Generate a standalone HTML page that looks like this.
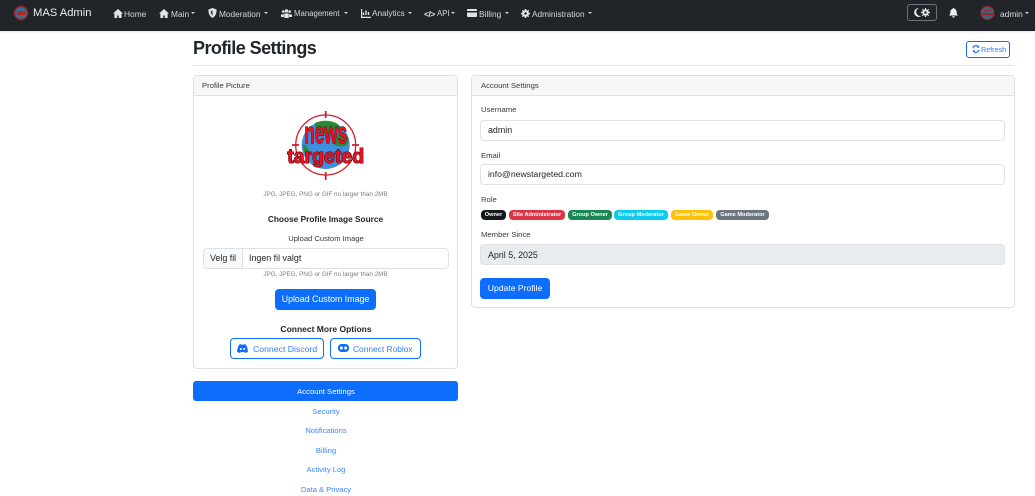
<!DOCTYPE html>
<html lang="en"><head><meta charset="utf-8"><title>Profile Settings</title>
<style>
*{box-sizing:border-box}
html,body{margin:0;padding:0;width:1035px;height:496px;overflow:hidden;background:#fff;font-family:"Liberation Sans",sans-serif;color:#212529}
.a,.t,svg.i{position:absolute}
.t{white-space:nowrap;line-height:1}
.c{transform:translateX(-50%)}
.nav{position:absolute;left:0;top:0;width:1035px;height:31px;background:#212529;box-shadow:0 1px 2px rgba(0,0,0,.12)}
.n{color:#d5d6d7;font-size:8.4px;top:8.5px;line-height:10px}
.car{position:absolute;top:12px;width:0;height:0;border-left:2.2px solid transparent;border-right:2.2px solid transparent;border-top:2.2px solid #d5d6d7}
.card{position:absolute;border:1px solid #dfe0e2;border-radius:4px;background:#fff}
.head{position:absolute;left:0;top:0;right:0;height:20px;background:#f7f7f7;border-bottom:1px solid #dfe0e2;border-radius:3px 3px 0 0}
.lab{font-size:7.7px;color:#343a40}
.inp{position:absolute;border:1px solid #dee2e6;border-radius:4px;background:#fff}
.val{font-size:8.9px;color:#212529}
.sm{font-size:6.3px;color:#7a8087}
.b{font-weight:bold}
.btn{position:absolute;background:#0d6efd;border-radius:4px;color:#fff;font-size:8.8px;text-align:center}
.out{position:absolute;border:1px solid #0d6efd;border-radius:3px;background:#fff}
.blue{color:#2f80fd}
.bd{position:absolute;top:210px;height:10px;border-radius:4px;color:#fff;font-size:5.6px;font-weight:bold;text-align:center;line-height:10px;white-space:nowrap}
.m{font-size:7.6px;color:#3d86fd}
</style></head><body>
<div class="nav"></div>
<svg class="i" style="left:13px;top:5px" width="16" height="16" viewBox="0 0 16 16"><circle cx="8" cy="8" r="6.5" fill="#3a6f8f" stroke="#a8212a" stroke-width="1.3"/><path d="M4 6h8v4H4z" fill="#b3262c"/><path d="M8 0v3M8 13v3M0 8h3M13 8h3" stroke="#a8212a"/></svg>
<div class="t" style="left:33px;top:8px;font-size:11.2px;color:#eceded">MAS Admin</div>

<svg class="i" style="left:113px;top:9px" width="10" height="9" viewBox="0 0 10 9"><path d="M5 0L0 4.5h1.4V9h2.800V6.500h1.600V9h2.800V4.500H10z" fill="#e2e3e4"/></svg>
<div class="t n" style="left:124px">Home</div>
<svg class="i" style="left:159px;top:9px" width="10" height="9" viewBox="0 0 10 9"><path d="M5 0L0 4.5h1.4V9h2.800V6.500h1.600V9h2.800V4.500H10z" fill="#e2e3e4"/></svg>
<div class="t n" style="left:171px">Main</div><div class="car" style="left:191px"></div>
<svg class="i" style="left:208px;top:8px" width="9" height="10" viewBox="0 0 9 10"><path d="M4.5 0L8.6 1.5C8.6 5.5 7.5 8.2 4.5 10 1.500 8.200.4 5.500.4 1.500z" fill="#e2e3e4"/><path d="M4.500 2.500V7.500C3.500 6.800 3 5.400 2.800 3.200z" fill="#212529"/></svg>
<div class="t n" style="left:219px;font-size:8.300px">Moderation</div><div class="car" style="left:264px"></div>
<svg class="i" style="left:281px;top:9px" width="11" height="9" viewBox="0 0 11 9"><circle cx="2.300" cy="2.600" r="1.300" fill="#e2e3e4"/><circle cx="8.700" cy="2.600" r="1.300" fill="#e2e3e4"/><circle cx="5.500" cy="1.900" r="1.700" fill="#e2e3e4"/><path d="M0 8V5.400h3V8zM8 8V5.400h3V8zM3.300 9V4.400h4.400V9z" fill="#e2e3e4"/></svg>
<div class="t n" style="left:294px;font-size:7.800px">Management</div><div class="car" style="left:344px"></div>
<svg class="i" style="left:361px;top:9px" width="10" height="9" viewBox="0 0 10 9"><path d="M.5 0v8.500H10M2.500 6V3.500M5 6V1.500M7.500 6V3" stroke="#e2e3e4" stroke-width="1.400" fill="none"/></svg>
<div class="t n" style="left:372px;font-size:8.200px">Analytics</div><div class="car" style="left:408px"></div>
<div class="t" style="left:424px;top:8.500px;line-height:10px;font-size:8.500px;font-weight:bold;color:#e2e3e4;letter-spacing:-.5px">&lt;/&gt;</div>
<div class="t n" style="left:437px;font-size:7.800px">API</div><div class="car" style="left:451px"></div>
<svg class="i" style="left:467px;top:9px" width="10" height="8" viewBox="0 0 10 8"><path d="M0 1a1 1 0 011-1h8a1 1 0 011 1v1H0zM0 3.500h10V7a1 1 0 01-1 1H1a1 1 0 01-1-1z" fill="#e2e3e4"/></svg>
<div class="t n" style="left:479px">Billing</div><div class="car" style="left:505px"></div>
<svg class="i" style="left:521px;top:9px" width="9" height="9" viewBox="0 0 10 10"><circle cx="5" cy="5" r="2.600" fill="none" stroke="#e2e3e4" stroke-width="2.400"/><path d="M5 0v2M5 8v2M0 5h2M8 5h2M1.500 1.500l1.400 1.400M7.100 7.100l1.400 1.400M8.500 1.500L7.100 2.900M2.900 7.100L1.500 8.500" stroke="#e2e3e4" stroke-width="1.600"/></svg>
<div class="t n" style="left:532px;font-size:8.300px">Administration</div><div class="car" style="left:588px"></div>

<div class="a" style="left:907px;top:4px;width:30px;height:17px;border:1px solid #6c757d;border-radius:3px"></div>
<svg class="i" style="left:914px;top:8px" width="17" height="9" viewBox="0 0 17 9"><path d="M5 .1A4.400 4.400 0 107.500 7.800 4 4 0 015 .1z" fill="#f2f2f2"/><circle cx="11.500" cy="4.500" r="2.200" fill="none" stroke="#e6e6e6" stroke-width="1.900"/><path d="M11.500 0v1.500M11.500 7.500V9M7 4.500h1.500M14.500 4.500H16M8.300 1.300l1 1M13.700 6.700l1 1M14.700 1.300l-1 1M9.300 6.700l-1 1" stroke="#e6e6e6" stroke-width="1.200"/></svg>
<svg class="i" style="left:949px;top:8px" width="9" height="10" viewBox="0 0 9 10"><path d="M4.500 0a1 1 0 011 .9C7 1.300 7.600 2.500 7.600 4c0 1.800.6 2.600 1.400 3.500H0C.8 6.600 1.400 5.800 1.400 4c0-1.500.6-2.700 2.100-3.100a1 1 0 011-.9zM3.200 8.300h2.600a1.300 1.300 0 01-2.600 0z" fill="#f0f0f0"/></svg>
<svg class="i" style="left:979px;top:5px" width="17" height="16" viewBox="0 0 17 16"><circle cx="8.500" cy="8" r="6.500" fill="#2d6c83" stroke="#a1242b" stroke-width="1.200"/><path d="M5 4.500h7v2.500H5z" fill="#b3262c"/><path d="M1.500 8h14v2.500h-14z" fill="#a92229"/><path d="M8.500 0v2M8.500 14v2" stroke="#a1242b"/></svg>
<div class="t n" style="left:1000px;font-size:8.400px;color:#dcdddd">admin</div><div class="car" style="left:1025px;top:12px"></div>

<div class="t" style="left:193px;top:39px;font-size:18px;color:#212529;font-weight:bold;letter-spacing:-.55px">Profile Settings</div>
<div class="a" style="left:193px;top:65px;width:821px;height:1px;background:#e3e4e6"></div>
<div class="out" style="left:966px;top:40.500px;width:44px;height:17px"></div>
<svg class="i" style="left:972px;top:45px" width="8" height="8" viewBox="0 0 8 8"><path d="M1 3.300A3 3 0 016.600 2.200M7 4.700A3 3 0 011.400 5.800" fill="none" stroke="#0d6efd" stroke-width="1.100"/><path d="M7 .5v2.300H4.800zM1 7.500V5.200h2.200z" fill="#0d6efd"/></svg>
<div class="t blue" style="left:981px;top:45.500px;font-size:7.200px">Refresh</div>

<!-- Left card -->
<div class="card" style="left:193px;top:75px;width:265px;height:294px"><div class="head"></div></div>
<div class="t lab" style="left:202px;top:81.500px">Profile Picture</div>

<svg class="i" style="left:282px;top:108px" width="88" height="74" viewBox="0 0 88 74">
<circle cx="43.700" cy="37" r="30" fill="none" stroke="#c9202c" stroke-width="1.300"/>
<circle cx="43.700" cy="37" r="24" fill="#3e8fe0"/>
<path d="M33 15c6-3 15-3 21 0 3 2 5 4 3 6-6 1-8 5-12 5-6 1-7-4-12-5zM50 28c5-2 12-1 16 1 1 4 0 8-3 9-5 1-11 0-13-4zM21 36c3 1 7 5 6 9l-3 2c-2-3-3-6-3-11z" fill="#2d8a34"/>
<path d="M43.700 3v7M43.700 64v8M10 37h7M70 37h7" stroke="#c9202c" stroke-width="1.800"/>
<text x="43.700" y="35" text-anchor="middle" font-family="Liberation Sans,sans-serif" font-weight="bold" font-size="31" textLength="43" lengthAdjust="spacingAndGlyphs" fill="#f00f1e" stroke="#3a0a0e" stroke-width="1.100" paint-order="stroke">news</text>
<text x="43.700" y="55" text-anchor="middle" font-family="Liberation Sans,sans-serif" font-weight="bold" font-size="20" textLength="77" lengthAdjust="spacingAndGlyphs" fill="#f00f1e" stroke="#3a0a0e" stroke-width="1.100" paint-order="stroke">targeted</text>
</svg>

<div class="t sm c" style="left:325.500px;top:192px">JPG, JPEG, PNG or GIF no larger than 2MB</div>
<div class="t c b" style="left:325.500px;top:215px;font-size:8.300px;color:#212529">Choose Profile Image Source</div>
<div class="t lab c" style="left:326px;top:235px;font-size:7.600px">Upload Custom Image</div>
<div class="inp" style="left:203px;top:248px;width:246px;height:21px"></div>
<div class="a" style="left:204px;top:249px;width:39px;height:19px;background:#f8f9fa;border-right:1px solid #dee2e6;border-radius:3px 0 0 3px"></div>
<div class="t val" style="left:210px;top:254px">Velg fil</div>
<div class="t val" style="left:249px;top:254px">Ingen fil valgt</div>
<div class="t sm c" style="left:325.500px;top:272px">JPG, JPEG, PNG or GIF no larger than 2MB</div>
<div class="btn" style="left:275px;top:289px;width:101px;height:21px;line-height:21px">Upload Custom Image</div>
<div class="t c b" style="left:326px;top:325px;font-size:8.500px">Connect More Options</div>

<div class="out" style="left:230px;top:338px;width:94px;height:21px;border-radius:4px"></div>
<svg class="i" style="left:237px;top:344px" width="11" height="9" viewBox="0 0 11 9"><path d="M2 .8C3 .3 4 .1 4.300.1l.3.6h1.800l.3-.6c.3 0 1.300.2 2.300.7C10.200 3 11 5.500 10.900 7.800 10 8.500 9 8.800 8 9l-.7-1c.5-.2.800-.4 1-.6-2 1-3.600 1-5.600 0 .3.200.6.400 1 .6L3 9C2 8.800 1 8.500.1 7.800 0 5.500.8 3 2 .8z" fill="#0d6efd"/><circle cx="3.800" cy="5" r="1" fill="#fff"/><circle cx="7.200" cy="5" r="1" fill="#fff"/></svg>
<div class="t val blue" style="left:253px;top:344.500px;font-size:8.700px">Connect Discord</div>
<div class="out" style="left:330px;top:338px;width:91px;height:21px;border-radius:4px"></div>
<svg class="i" style="left:338px;top:344px" width="11" height="8" viewBox="0 0 11 8"><rect width="11" height="8" rx="3.500" fill="#0d6efd"/><rect x="2" y="2.500" width="2.800" height="3" rx="1.200" fill="#fff"/><rect x="6.200" y="2.500" width="2.800" height="3" rx="1.200" fill="#fff"/></svg>
<div class="t val blue" style="left:353px;top:344.500px;font-size:8.400px">Connect Roblox</div>

<!-- Side menu -->
<div class="a" style="left:193px;top:381px;width:265px;height:20px;background:#0d6efd;border-radius:3px"></div>
<div class="t m c" style="left:326px;top:387.500px;color:#fff;font-size:7.700px">Account Settings</div>
<div class="t m c" style="left:326px;top:407.500px">Security</div>
<div class="t m c" style="left:326px;top:426.500px">Notifications</div>
<div class="t m c" style="left:326px;top:446.500px">Billing</div>
<div class="t m c" style="left:326px;top:465.500px">Activity Log</div>
<div class="t m c" style="left:326px;top:485.500px">Data &amp; Privacy</div>

<!-- Right card -->
<div class="card" style="left:471px;top:75px;width:544px;height:233px"><div class="head"></div></div>
<div class="t lab" style="left:481px;top:81.500px">Account Settings</div>
<div class="t lab" style="left:481px;top:106px">Username</div>
<div class="inp" style="left:480px;top:120px;width:525px;height:21px"></div>
<div class="t val" style="left:488px;top:126px">admin</div>
<div class="t lab" style="left:481px;top:151.500px">Email</div>
<div class="inp" style="left:480px;top:164px;width:525px;height:21px"></div>
<div class="t val" style="left:488px;top:170px;font-size:8.700px">info@newstargeted.com</div>
<div class="t lab" style="left:481px;top:196px">Role</div>
<div class="bd" style="left:481px;width:25px;background:#16191c">Owner</div>
<div class="bd" style="left:509px;width:56px;background:#dc3545">Site Administrator</div>
<div class="bd" style="left:568px;width:44px;background:#198754">Group Owner</div>
<div class="bd" style="left:614px;width:54px;background:#0dcaf0">Group Moderator</div>
<div class="bd" style="left:671px;width:42px;background:#ffc107">Game Owner</div>
<div class="bd" style="left:716px;width:53px;background:#6c757d">Game Moderator</div>
<div class="t lab" style="left:481px;top:230.500px">Member Since</div>
<div class="a" style="left:480px;top:244px;width:525px;height:21px;background:#e9ecef;border:1px solid #dee2e6;border-radius:4px"></div>
<div class="t val" style="left:488px;top:250.500px">April 5, 2025</div>
<div class="btn" style="left:480px;top:278px;width:70px;height:21px;line-height:21px;font-size:8.600px">Update Profile</div>
</body></html>
